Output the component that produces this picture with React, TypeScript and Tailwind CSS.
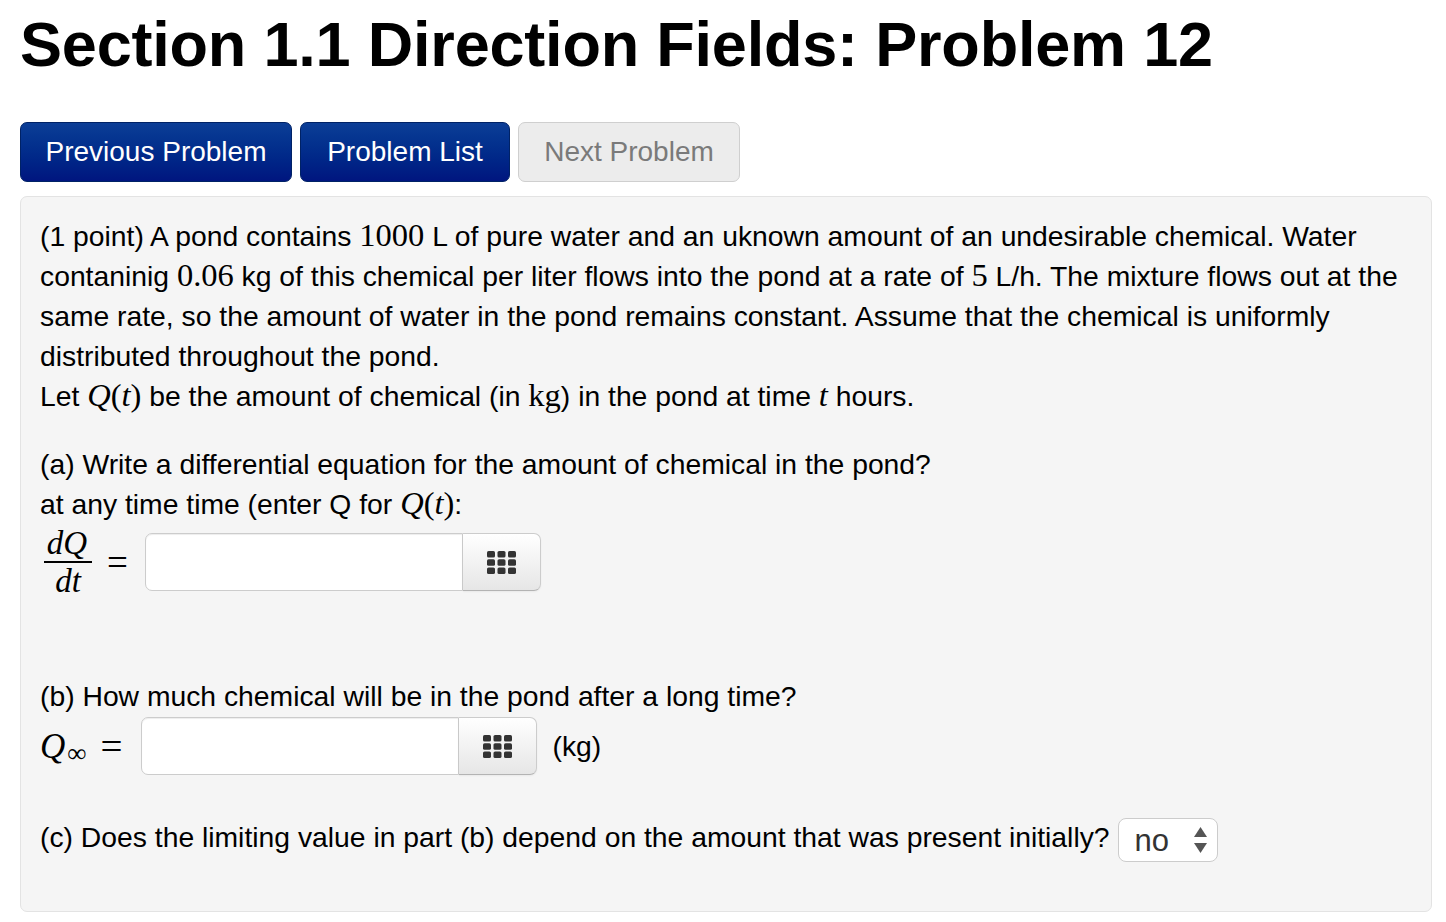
import React from "react";

// Inline math set in a Times-like face, like MathJax output
function M({ children, italic = false }: { children: React.ReactNode; italic?: boolean }) {
  return (
    <span
      className={`font-['Liberation_Serif',serif] text-[32.5px] leading-[0] ${italic ? "italic" : ""}`}
    >
      {children}
    </span>
  );
}

function GridIcon() {
  return (
    <svg width="29" height="23" viewBox="0 0 29 23" fill="#333">
      {[0, 1, 2].map((r) =>
        [0, 1, 2].map((c) => (
          <rect key={`${r}-${c}`} x={c * 10.5} y={r * 8.2} width="8" height="6.6" rx="1.6" />
        ))
      )}
    </svg>
  );
}

function AnswerInput({ width = 318 }: { width?: number }) {
  return (
    <div className="flex h-[58px]">
      <div
        className="h-full bg-white border border-[#cccccc] rounded-l-[7px] shadow-[inset_0_1px_1px_rgba(0,0,0,0.075)]"
        style={{ width }}
      />
      <div className="h-full w-[78px] flex items-center justify-center border border-l-0 border-[#cccccc] border-b-[#b3b3b3] rounded-r-[7px] bg-gradient-to-b from-white to-[#e6e6e6] shadow-[0_1px_2px_rgba(0,0,0,0.05)]">
        <GridIcon />
      </div>
    </div>
  );
}

export default function App() {
  return (
    <div className="min-h-screen bg-white px-5 pt-[13px] font-['Liberation_Sans',Arial,sans-serif] text-black">
      <h1 className="text-[63px] leading-none font-bold tracking-[-0.2px]">
        Section 1.1 Direction Fields: Problem 12
      </h1>

      {/* м•ҲлӮҙ лІ„нҠј */}
      <div className="mt-[46px] flex gap-2">
        <button className="h-[60px] w-[272px] rounded-[7px] border border-[#002266] bg-gradient-to-b from-[#0c3e96] to-[#00157f] text-[28px] text-white">
          Previous Problem
        </button>
        <button className="h-[60px] w-[210px] rounded-[7px] border border-[#002266] bg-gradient-to-b from-[#0c3e96] to-[#00157f] text-[28px] text-white">
          Problem List
        </button>
        <button className="h-[60px] w-[222px] rounded-[7px] border border-[#cfcfcf] bg-[#ececec] text-[28px] text-[#7a7a7a]">
          Next Problem
        </button>
      </div>

      {/* л¬ём ң ліёл¬ё */}
      <div className="mt-[14px] w-[1412px] rounded-[7px] border border-[#e3e3e3] bg-[#f5f5f5] px-[19px] pt-[19px] pb-[48px] text-[28.3px] leading-[40px]">
        <div>
          (1 point) A pond contains <M>1000</M> L of pure water and an uknown amount of an undesirable
          chemical. Water contaninig <M>0.06</M> kg of this chemical per liter flows into the pond at a
          rate of <M>5</M> L/h. The mixture flows out at the same rate, so the amount of water in the
          pond remains constant. Assume that the chemical is uniformly distributed throughout the pond.
          <br />
          Let{" "}
          <M>
            <i>Q</i>(<i>t</i>)
          </M>{" "}
          be the amount of chemical (in <M>kg</M>) in the pond at time <M italic>t</M> hours.
        </div>

        <div className="mt-[28px]">
          (a) Write a differential equation for the amount of chemical in the pond?
          <br />
          at any time time (enter Q for{" "}
          <M>
            <i>Q</i>(<i>t</i>)
          </M>
          :
        </div>

        <div className="flex h-[76px] items-center">
          <div className="ml-[4px] flex w-[48px] flex-col items-center font-['Liberation_Serif',serif] text-[33px] italic leading-[36px]">
            <span className="pr-[2px]">dQ</span>
            <span className="block h-[2px] w-full bg-black" />
            <span>dt</span>
          </div>
          <span className="ml-[15px] mr-[17px] font-['Liberation_Serif',serif] text-[37px] leading-none">
            =
          </span>
          <AnswerInput />
        </div>

        <div className="mt-[76px]">(b) How much chemical will be in the pond after a long time?</div>

        <div className="flex h-[60px] items-center">
          <span className="font-['Liberation_Serif',serif] text-[35px] italic leading-none">Q</span>
          <span className="mt-[14px] ml-[2px] font-['Liberation_Serif',serif] text-[27px] leading-none">
            {"\u221E"}
          </span>
          <span className="ml-[14px] mr-[18px] font-['Liberation_Serif',serif] text-[39px] leading-none">
            =
          </span>
          <AnswerInput />
          <span className="ml-[16px]">(kg)</span>
        </div>

        <div className="mt-[41px] flex items-center">
          <span className="mb-[6px]">
            (c) Does the limiting value in part (b) depend on the amount that was present initially?
          </span>
          <div className="ml-[8px] flex h-[44px] w-[100px] items-center justify-between rounded-[8px] border border-[#cccccc] bg-white pl-[16px] pr-[9px]">
            <span className="text-[31px] leading-none text-[#333]">no</span>
            <svg width="15" height="28" viewBox="0 0 15 28" fill="#555">
              <path d="M7.5 1 L14 11 H1 Z" />
              <path d="M1 17 H14 L7.5 27 Z" />
            </svg>
          </div>
        </div>
      </div>
    </div>
  );
}
